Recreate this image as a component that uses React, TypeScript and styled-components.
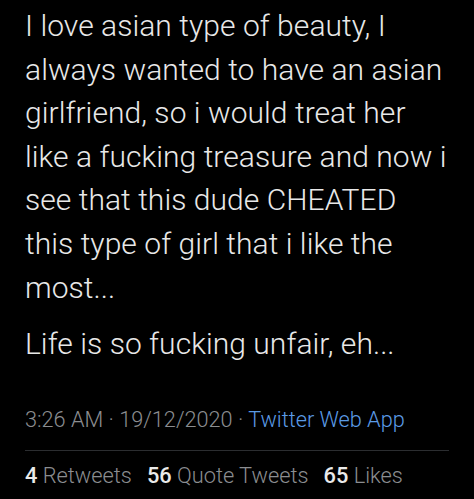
import React from "react";
import styled, { createGlobalStyle } from "styled-components";

const Global = createGlobalStyle`
  html, body { margin: 0; padding: 0; background: #000; }
  body { width: 474px; height: 499px; overflow: hidden; }
`;

const Tweet = styled.div`
  box-sizing: border-box;
  width: 474px;
  height: 499px;
  background: #000;
  padding: 4px 25px 0 25px;
  font-family: Roboto, "Liberation Sans", sans-serif;
  -webkit-font-smoothing: antialiased;
`;

const Paragraph = styled.p<{ $gap?: number }>`
  margin: 0 0 ${(p) => p.$gap ?? 0}px 0;
  color: #e8e8e8;
  font-size: 30px;
  font-weight: 300;
  line-height: 43.6px;
  letter-spacing: 0.05px;
`;

const Line = styled.span`
  display: block;
  white-space: nowrap;
`;

const Meta = styled.div`
  margin-top: 41px;
  color: #8b8d90;
  font-size: 21.7px;
  font-weight: 300;
  line-height: 26px;
  white-space: nowrap;
`;

const Source = styled.span`
  color: #5b9be6;
`;

const Divider = styled.hr`
  border: none;
  border-top: 1px solid #2b2d30;
  margin: 17px 0 0 0;
`;

const Stats = styled.div`
  display: flex;
  gap: 15px;
  margin-top: 12px;
  font-size: 21.8px;
  line-height: 26px;
  font-weight: 300;
  color: #8b8d90;
`;

const Stat = styled.span`
  white-space: nowrap;
`;

const Num = styled.b`
  color: #eaeaea;
  font-weight: 500;
`;

export default function App() {
  return (
    <>
      <Global />
      <Tweet>
        <Paragraph $gap={13}>
          <Line>I love asian type of beauty, I</Line>
          <Line>always wanted to have an asian</Line>
          <Line>girlfriend, so i would treat her</Line>
          <Line>like a fucking treasure and now i</Line>
          <Line>see that this dude CHEATED</Line>
          <Line>this type of girl that i like the</Line>
          <Line>most...</Line>
        </Paragraph>
        <Paragraph>
          <Line>Life is so fucking unfair, eh...</Line>
        </Paragraph>
        <Meta>
          3:26 AM · 19/12/2020 · <Source>Twitter Web App</Source>
        </Meta>
        <Divider />
        <Stats>
          <Stat>
            <Num>4</Num> Retweets
          </Stat>
          <Stat>
            <Num>56</Num> Quote Tweets
          </Stat>
          <Stat>
            <Num>65</Num> Likes
          </Stat>
        </Stats>
      </Tweet>
    </>
  );
}
